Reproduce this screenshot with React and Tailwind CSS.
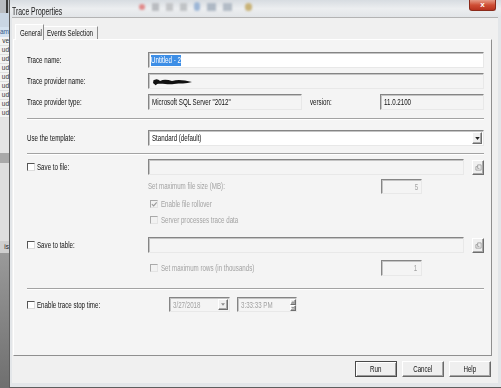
import React from 'react'

/**
 * Trace Properties dialog (SQL Server Profiler), General tab.
 */

const FONT = { fontFamily: '"Liberation Sans", Arial, sans-serif' }

const Txt = ({ children, right = false, className = '' }) => (
  <span
    className={`${right ? 'origin-right' : 'origin-left'} inline-block scale-x-[0.65] whitespace-nowrap leading-none ${className}`}
  >
    {children}
  </span>
)

const Check = ({ disabled = false, checked = false }) => (
  <span
    className={`relative w-[8px] h-[8px] shrink-0 border-t border-l border-r border-b ${
      disabled
        ? 'border-t-[#a9a9a9] border-l-[#a9a9a9] border-r-[#e4e4e4] border-b-[#e4e4e4] bg-[#f2f2f2]'
        : 'border-t-[#555] border-l-[#555] border-r-[#dcdcdc] border-b-[#dcdcdc] bg-white'
    }`}
  >
    {checked && (
      <svg viewBox="0 0 8 8" className="absolute left-0 top-0 w-[7px] h-[7px]">
        <path d="M1 3.5 L3 5.5 L6.5 1.5" stroke="#9a9a9a" strokeWidth="1.3" fill="none" />
      </svg>
    )}
  </span>
)

const Sunken = ({ className = '', children }) => (
  <div
    className={`h-full flex items-center border-t border-l border-r border-b border-t-[#858585] border-l-[#858585] border-r-[#e8e8e8] border-b-[#e8e8e8] shadow-[inset_1px_1px_0_#c4c4c4] ${className}`}
  >
    {children}
  </div>
)

const Raised = ({ className = '', children }) => (
  <div
    className={`flex items-center justify-center border-t border-l border-r border-b border-t-white border-l-white border-r-[#6e6e6e] border-b-[#6e6e6e] shadow-[inset_-1px_-1px_0_#a8a8a8] bg-[#efefef] ${className}`}
  >
    {children}
  </div>
)

const Separator = ({ className = '' }) => (
  <div className={`h-[2px] border-t border-[#a3a3a3] border-b border-b-white ${className}`} />
)

const BrowseBtn = () => (
  <Raised className="w-[12px] h-[15px]">
    <svg viewBox="0 0 8 8" className="w-[7px] h-[7px]">
      <path d="M1 7 V3 H3 V1 H7 V7 Z M3 3 V5 H5" stroke="#8a8a8a" strokeWidth="0.8" fill="none" />
    </svg>
  </Raised>
)

const Label = ({ children }) => (
  <div className="w-[121px] shrink-0 text-[#111]">
    <Txt>{children}</Txt>
  </div>
)

const LeftStrip = () => {
  const rows = ['ve', 'ud', 'ud', 'ud', 'ud', 'ud', 'ud', 'ud', 'ud']
  return (
    <div className="w-[9px] h-full shrink-0 flex flex-col overflow-hidden text-[6.5px] leading-none">
      <div className="h-[13px] bg-[#b8bcc1] flex justify-end">
        <div className="w-[2px] bg-[#3a3a3a] mr-[1px]" />
      </div>
      <div className="h-[14px] bg-[#c9d6e4]" />
      <div className="h-[10px] bg-[#d4e2f0] flex justify-end items-center text-[#36598a]">am</div>
      {rows.map((r, i) => (
        <div
          key={i}
          className="h-[9px] bg-[#f3f3f3] border-b border-[#e0e0e0] flex justify-end items-center text-[#333]"
        >
          {r}
        </div>
      ))}
      <div className="h-[35px] bg-[#e4e4e4]" />
      <div className="h-[10px] bg-[#a9a9a9]" />
      <div className="h-[78px] bg-[#dedede]" />
      <div className="h-[12px] bg-[#cfcfcf] flex justify-end items-center text-[#222]">is</div>
      <div className="flex-1 bg-linear-to-b from-[#9a9a9a] to-[#6f6f6f]" />
    </div>
  )
}

const TitleBar = () => (
  <div className="h-[17px] shrink-0 flex bg-linear-to-b from-[#d7dce1] via-[#eceef0] to-[#e2e5e8]">
    <div className="pl-[2px] pt-[4px] text-[10.5px] text-[#1a1a1a]">
      <Txt>Trace Properties</Txt>
    </div>
    {/* blurred toolbar of the app behind the glass frame */}
    <div className="ml-[50px] flex items-center gap-[7px] pb-[4px] blur-[1px]">
      <div className="w-[6px] h-[6px] rounded-full bg-[#e08a8a]" />
      <div className="w-[7px] h-[8px] bg-[#b9bcc0]" />
      <div className="w-[7px] h-[8px] bg-[#c3c5c8]" />
      <div className="w-[7px] h-[8px] bg-[#c0c3c6]" />
      <div className="w-[6px] h-[9px] rounded-full bg-[#9db6d6]" />
      <div className="w-[9px] h-[8px] bg-[#aeb8c4]" />
      <div className="w-[9px] h-[8px] bg-[#b3bcc6]" />
      <div className="ml-[6px] w-[7px] h-[8px] rounded-full bg-[#c8b277]" />
    </div>
    <div className="flex-1" />
    <div className="mr-[5px] w-[27px] h-[11px] rounded-b-[3px] border border-t-0 border-[#8a2a1a] bg-linear-to-b from-[#e59a86] via-[#cf4e35] to-[#b8321e] flex items-center justify-center text-white text-[8px] font-bold leading-none">
      x
    </div>
  </div>
)

const Tabs = () => (
  <div className="h-[21px] shrink-0 flex items-end pl-[3px] text-[9.5px] text-[#111]">
    <div className="relative z-10 -mb-[1px] h-[16px] w-[29px] bg-[#f4f4f4] border-t border-l border-r border-t-white border-l-white border-r-[#8d8d8d] flex items-center pl-[4px]">
      <Txt>General</Txt>
    </div>
    <div className="h-[13px] w-[54px] border-t border-r border-t-white border-r-[#8d8d8d] flex items-center pl-[3px]">
      <Txt>Events Selection</Txt>
    </div>
  </div>
)

const Panel = () => (
  <div className="flex-1 ml-[1px] mr-[6px] flex flex-col pl-[13px] pr-[7px] bg-[#f4f4f4] border border-t-white border-l-white border-r-[#8f8f8f] border-b-[#8f8f8f] text-[9.5px]">
    {/* Trace name */}
    <div className="mt-[12px] h-[16px] flex items-center">
      <Label>Trace name:</Label>
      <Sunken className="flex-1 bg-white pl-[2px]">
        <span className="h-[11px] w-[30px] bg-[#3d8ee6] text-white flex items-center">
          <Txt>Untitled - 2</Txt>
        </span>
      </Sunken>
    </div>

    {/* Trace provider name (redacted) */}
    <div className="mt-[5px] h-[16px] flex items-center">
      <Label>Trace provider name:</Label>
      <Sunken className="flex-1 pl-[3px]">
        <svg viewBox="0 0 42 9" className="w-[42px] h-[9px]">
          <path
            d="M1 5 C3 1 6 2 8 4 C12 2 16 3 20 4 C26 2 32 3 40 5 C34 7 28 6 22 7 C16 8 10 6 5 7 C3 8 1 7 1 5 Z"
            fill="#111"
          />
          <path d="M2 3 L4 8" stroke="#111" strokeWidth="1.5" />
        </svg>
      </Sunken>
    </div>

    {/* Trace provider type / version */}
    <div className="mt-[5px] h-[16px] flex items-center">
      <Label>Trace provider type:</Label>
      <Sunken className="w-[154px] pl-[3px] text-[#111]">
        <Txt>Microsoft SQL Server "2012"</Txt>
      </Sunken>
      <div className="w-[78px] pl-[8px] text-[#111]">
        <Txt>version:</Txt>
      </div>
      <Sunken className="flex-1 pl-[3px] text-[#111]">
        <Txt>11.0.2100</Txt>
      </Sunken>
    </div>

    <Separator className="mt-[8px]" />

    {/* Template */}
    <div className="mt-[10px] h-[16px] flex items-center">
      <Label>Use the template:</Label>
      <Sunken className="flex-1 bg-white pl-[3px] pr-[1px] text-[#111]">
        <Txt>Standard (default)</Txt>
        <div className="flex-1" />
        <Raised className="w-[10px] h-[12px]">
          <svg viewBox="0 0 6 4" className="w-[5px] h-[3px]">
            <path d="M0 0 H6 L3 4 Z" fill="#222" />
          </svg>
        </Raised>
      </Sunken>
    </div>

    <Separator className="mt-[7px]" />

    {/* Save to file */}
    <div className="mt-[4px] h-[16px] flex items-center">
      <div className="w-[121px] shrink-0 flex items-center gap-[2px] text-[#111]">
        <Check />
        <Txt>Save to file:</Txt>
      </div>
      <Sunken className="flex-1" />
      <div className="w-[8px]" />
      <BrowseBtn />
    </div>

    <div className="mt-[4px] h-[15px] flex items-center text-[#a2a2a2]">
      <div className="w-[121px] shrink-0" />
      <div className="w-[233px]">
        <Txt>Set maximum file size (MB):</Txt>
      </div>
      <Sunken className="w-[41px] justify-end pr-[3px]">
        <Txt right>5</Txt>
      </Sunken>
    </div>

    <div className="mt-[3px] h-[14px] flex items-center gap-[3px] pl-[123px] text-[#a2a2a2]">
      <Check disabled checked />
      <Txt>Enable file rollover</Txt>
    </div>

    <div className="mt-[2px] h-[14px] flex items-center gap-[3px] pl-[123px] text-[#a2a2a2]">
      <Check disabled />
      <Txt>Server processes trace data</Txt>
    </div>

    {/* Save to table */}
    <div className="mt-[10px] h-[16px] flex items-center">
      <div className="w-[121px] shrink-0 flex items-center gap-[2px] text-[#111]">
        <Check />
        <Txt>Save to table:</Txt>
      </div>
      <Sunken className="flex-1" />
      <div className="w-[8px]" />
      <BrowseBtn />
    </div>

    <div className="mt-[7px] h-[16px] flex items-center text-[#a2a2a2]">
      <div className="w-[123px] shrink-0" />
      <div className="w-[231px] flex items-center gap-[3px]">
        <Check disabled />
        <Txt>Set maximum rows (in thousands)</Txt>
      </div>
      <Sunken className="w-[41px] justify-end pr-[4px]">
        <Txt right>1</Txt>
      </Sunken>
    </div>

    <Separator className="mt-[12px]" />

    {/* Stop time */}
    <div className="mt-[7px] h-[15px] flex items-center">
      <div className="w-[142px] shrink-0 flex items-center gap-[2px] text-[#111]">
        <Check />
        <Txt>Enable trace stop time:</Txt>
      </div>
      <Sunken className="w-[61px] pl-[3px] pr-[1px] text-[#a2a2a2]">
        <Txt>3/27/2018</Txt>
        <div className="flex-1" />
        <Raised className="w-[10px] h-[11px]">
          <svg viewBox="0 0 6 4" className="w-[4px] h-[3px]">
            <path d="M0 0 H6 L3 4 Z" fill="#8a8a8a" />
          </svg>
        </Raised>
      </Sunken>
      <div className="w-[7px]" />
      <Sunken className="w-[60px] pl-[3px] pr-[1px] text-[#a2a2a2]">
        <Txt>3:33:33 PM</Txt>
        <div className="flex-1" />
        <div className="w-[8px] h-[12px] flex flex-col">
          <Raised className="flex-1">
            <svg viewBox="0 0 6 3" className="w-[4px] h-[2px]">
              <path d="M0 3 H6 L3 0 Z" fill="#9a9a9a" />
            </svg>
          </Raised>
          <Raised className="flex-1">
            <svg viewBox="0 0 6 3" className="w-[4px] h-[2px]">
              <path d="M0 0 H6 L3 3 Z" fill="#9a9a9a" />
            </svg>
          </Raised>
        </div>
      </Sunken>
    </div>

    <div className="flex-1" />
  </div>
)

const DialogButton = ({ label, isDefault = false }) => (
  <div
    className={`w-[42px] h-[16px] flex items-center justify-center bg-[#efefef] text-[9.5px] text-[#111] ${
      isDefault
        ? 'border border-[#4a4a4a] shadow-[inset_1px_1px_0_#ffffff,inset_-1px_-1px_0_#9a9a9a]'
        : 'border-t border-l border-r border-b border-t-white border-l-white border-r-[#6a6a6a] border-b-[#6a6a6a] shadow-[inset_-1px_-1px_0_#a5a5a5]'
    }`}
  >
    <span className="inline-block scale-x-[0.65] whitespace-nowrap leading-none">{label}</span>
  </div>
)

export default function App() {
  return (
    <div className="w-[501px] h-[388px] flex overflow-hidden bg-[#dcdcdc]" style={FONT}>
      <LeftStrip />
      <div className="flex-1 flex flex-col border-l border-b border-[#5e5e5e] bg-[#e3e6e9]">
        <TitleBar />
        <div className="flex-1 ml-[2px] mr-[3px] mb-[4px] flex flex-col bg-[#f0f0f0] border-t border-[#b3b3b3]">
          <Tabs />
          <Panel />
          <div className="mt-[5px] mb-[6px] flex justify-end gap-[5px] pr-[7px]">
            <DialogButton label="Run" isDefault />
            <DialogButton label="Cancel" />
            <DialogButton label="Help" />
          </div>
        </div>
      </div>
    </div>
  )
}
